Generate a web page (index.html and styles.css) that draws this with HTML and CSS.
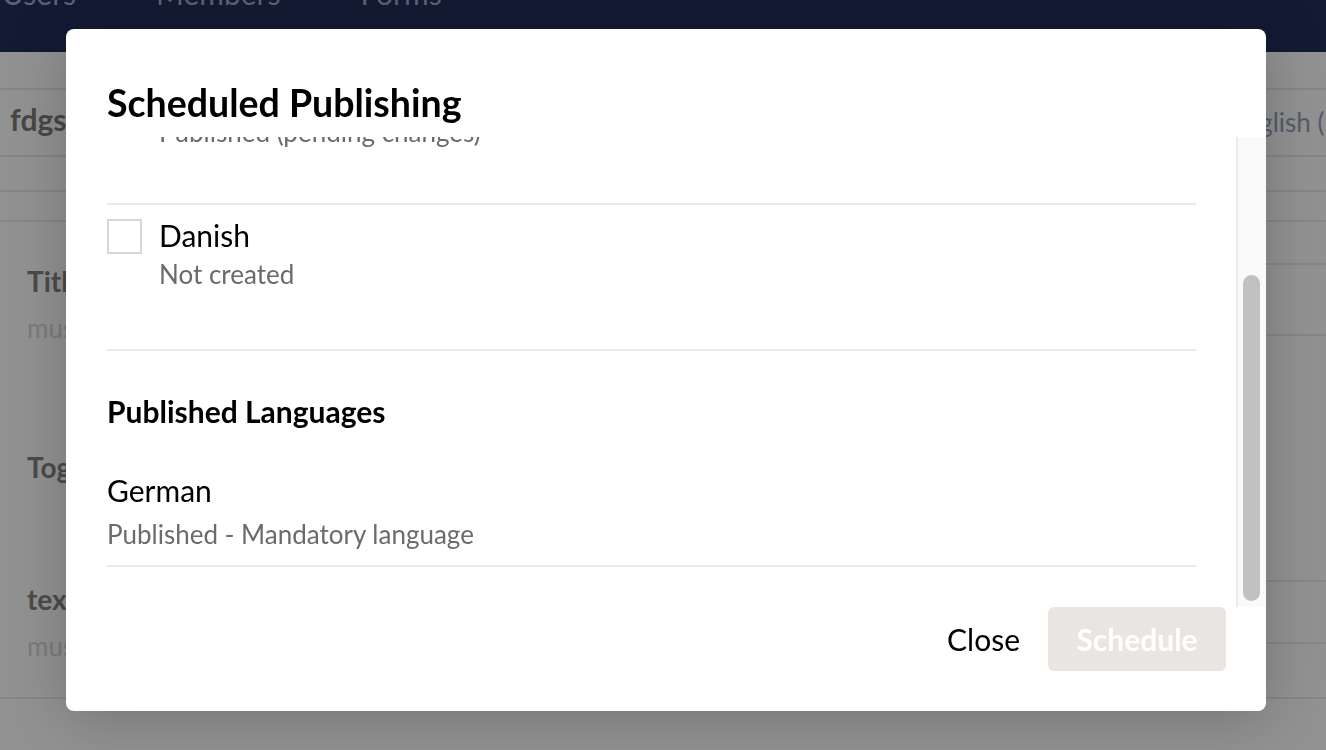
FILE: index.html
```html
<!DOCTYPE html>
<html lang="en">
<head>
<meta charset="utf-8">
<title>Scheduled Publishing</title>
<link rel="stylesheet" href="styles.css">
</head>
<body>
<div class="app">
  <header class="topnav">
    <nav class="nav"><span>Users</span><span>Members</span><span>Forms</span></nav>
  </header>
  <div class="subbar"></div>
  <div class="titlebar">
    <span class="doc-name">fdgs</span>
    <span class="culture">English (United States)</span>
  </div>
  <div class="tabs"></div>
  <div class="tabs2"></div>
  <div class="props">
    <div class="labels">
      <div class="prop p1"><div class="prop-label">Title</div><div class="prop-desc">must be filled</div></div>
      <div class="prop p2"><div class="prop-label">Toggle</div></div>
      <div class="prop p3"><div class="prop-label">text</div><div class="prop-desc">must be filled</div></div>
    </div>
    <div class="editors">
      <div class="ed ed1"></div>
      <div class="ed ed2"></div>
      <div class="ed ed3"></div>
      <div class="ed ed4"></div>
    </div>
  </div>
</div>

<div class="overlay">
  <div class="modal">
    <h1 class="modal-title">Scheduled Publishing</h1>
    <div class="modal-body">
      <div class="scroll-view">
        <div class="scroll-inner">
          <p class="intro">What languages would you like to schedule?</p>
          <div class="variant variant-first">
            <span class="checkbox"></span>
            <div class="variant-text">
              <div class="variant-name">English (United States)</div>
              <div class="variant-state">Published (pending changes)</div>
            </div>
          </div>
          <div class="variant variant-last">
            <span class="checkbox"></span>
            <div class="variant-text">
              <div class="variant-name">Danish</div>
              <div class="variant-state">Not created</div>
            </div>
          </div>
          <h2 class="section-title">Published Languages</h2>
          <div class="published">
            <div class="variant-name">German</div>
            <div class="variant-state published-state">Published - Mandatory language</div>
          </div>
        </div>
      </div>
      <div class="scrollbar"><div class="scrollbar-thumb"></div></div>
    </div>
    <div class="modal-footer">
      <button class="btn-link" type="button">Close</button>
      <button class="btn-primary" type="button" disabled>Schedule</button>
    </div>
  </div>
</div>
</body>
</html>
```

FILE: styles.css
```css
* { box-sizing: border-box; }

html, body {
  margin: 0;
  height: 750px;
  overflow: hidden;
}

body {
  background: #929292;
  font-family: Lato, "Open Sans", "Liberation Sans", sans-serif;
}

/* ---------- background app (dimmed) ---------- */
.app {
  display: flex;
  flex-direction: column;
}

.topnav {
  height: 52px;
  background: #131a33;
  overflow: hidden;
}

.nav {
  display: flex;
  gap: 80px;
  margin-top: -25px;
  margin-left: 2px;
  font-size: 30px;
  line-height: 36px;
  color: #5b6276;
}

.subbar {
  height: 38px;
  border-bottom: 2px solid #868686;
}

.titlebar {
  height: 67px;
  border-bottom: 2px solid #868686;
  display: flex;
  align-items: flex-start;
  padding-left: 10px;
  overflow: hidden;
}

.doc-name {
  font-size: 30px;
  line-height: 58px;
  font-weight: 700;
  color: #474747;
}

.culture {
  margin-left: auto;
  flex: 0 0 96px;
  min-width: 0;
  white-space: nowrap;
  font-size: 26px;
  line-height: 64px;
  color: #555b6b;
}

.tabs {
  height: 35px;
  border-bottom: 2px solid #868686;
}

.tabs2 {
  height: 30px;
  border-bottom: 2px solid #868686;
}

.props {
  display: flex;
  height: 477px;
  border-bottom: 2px solid #868686;
}

.labels {
  width: 320px;
  padding-left: 27px;
}

.prop { padding-top: 42px; }
.p1 { height: 188px; }
.p2 { height: 130px; padding-top: 40px; }

.prop-label {
  font-size: 28px;
  line-height: 34px;
  font-weight: 700;
  color: #4b4b4b;
}

.prop-desc {
  margin-top: 13px;
  font-size: 26px;
  line-height: 34px;
  color: #7b7b7b;
}

.editors {
  flex: 1;
  display: flex;
  flex-direction: column;
}

.ed { border-bottom: 2px solid #868686; }
.ed1 { height: 43px; }
.ed2 { height: 71px; }
.ed3 { height: 246px; }
.ed4 { height: 62px; }

/* ---------- modal ---------- */
.overlay {
  position: fixed;
  inset: 0;
  display: flex;
  align-items: flex-start;
  padding: 29px 0 0 66px;
}

.modal {
  width: 1200px;
  height: 682px;
  background: #fff;
  border-radius: 8px;
  display: flex;
  flex-direction: column;
  box-shadow: 0 6px 60px rgba(0, 0, 0, 0.22);
  overflow: hidden;
}

.modal-title {
  flex: 0 0 108px;
  margin: 0;
  padding: 51px 41px 0;
  font-size: 37.5px;
  line-height: 45px;
  font-weight: 700;
  color: #000;
  white-space: nowrap;
}

.modal-body {
  flex: 0 0 470px;
  display: flex;
  min-height: 0;
}

.scroll-view {
  flex: 1;
  min-width: 0;
  overflow: hidden;
  display: flex;
  flex-direction: column-reverse;
  padding: 0 40px 0 41px;
}

.scroll-inner {
  flex: 0 0 auto;
  padding-bottom: 40px;
}

.scrollbar {
  flex: 0 0 30px;
  background: #fafafa;
  border-left: 2px solid #ebebeb;
  padding: 138px 6px 6px 5px;
}

.scrollbar-thumb {
  height: 326px;
  border-radius: 9px;
  background: #c1c1c1;
}

.intro {
  margin: 0;
  height: 109px;
  padding-top: 16px;
  font-size: 26px;
  line-height: 36px;
  color: #1b1b1b;
}

.variant {
  display: flex;
  gap: 17px;
  align-items: flex-start;
  border-top: 2px solid #e9e9e9;
  padding: 12px 0 57px;
}

.variant-first { padding-bottom: 53px; }

.variant-last { border-bottom: 2px solid #e9e9e9; }

.checkbox {
  flex: 0 0 35px;
  width: 35px;
  height: 35px;
  margin-top: 2px;
  border: 2px solid #d8d8d8;
  background: #fff;
}

.variant-name {
  font-size: 30px;
  line-height: 36px;
  color: #000;
}

.variant-state {
  margin-top: 3px;
  font-size: 26px;
  line-height: 36px;
  color: #6b6b6b;
}

.section-title {
  margin: 42px 0 0;
  font-size: 30px;
  line-height: 36px;
  font-weight: 700;
  color: #000;
}

.published {
  margin-top: 43px;
  padding-bottom: 13px;
  border-bottom: 2px solid #e9e9e9;
}

.published-state { margin-top: 8px; }

.modal-footer {
  flex: 1;
  display: flex;
  justify-content: flex-end;
  align-items: flex-start;
  padding: 0 40px 40px;
}

.btn-link {
  height: 64px;
  padding: 0 28px;
  border: none;
  background: none;
  font-family: inherit;
  font-size: 30px;
  color: #000;
}

.btn-primary {
  width: 178px;
  height: 64px;
  border: none;
  border-radius: 6px;
  background: #e9e5e2;
  color: #fff;
  font-family: inherit;
  font-size: 30px;
  font-weight: 700;
}
```
